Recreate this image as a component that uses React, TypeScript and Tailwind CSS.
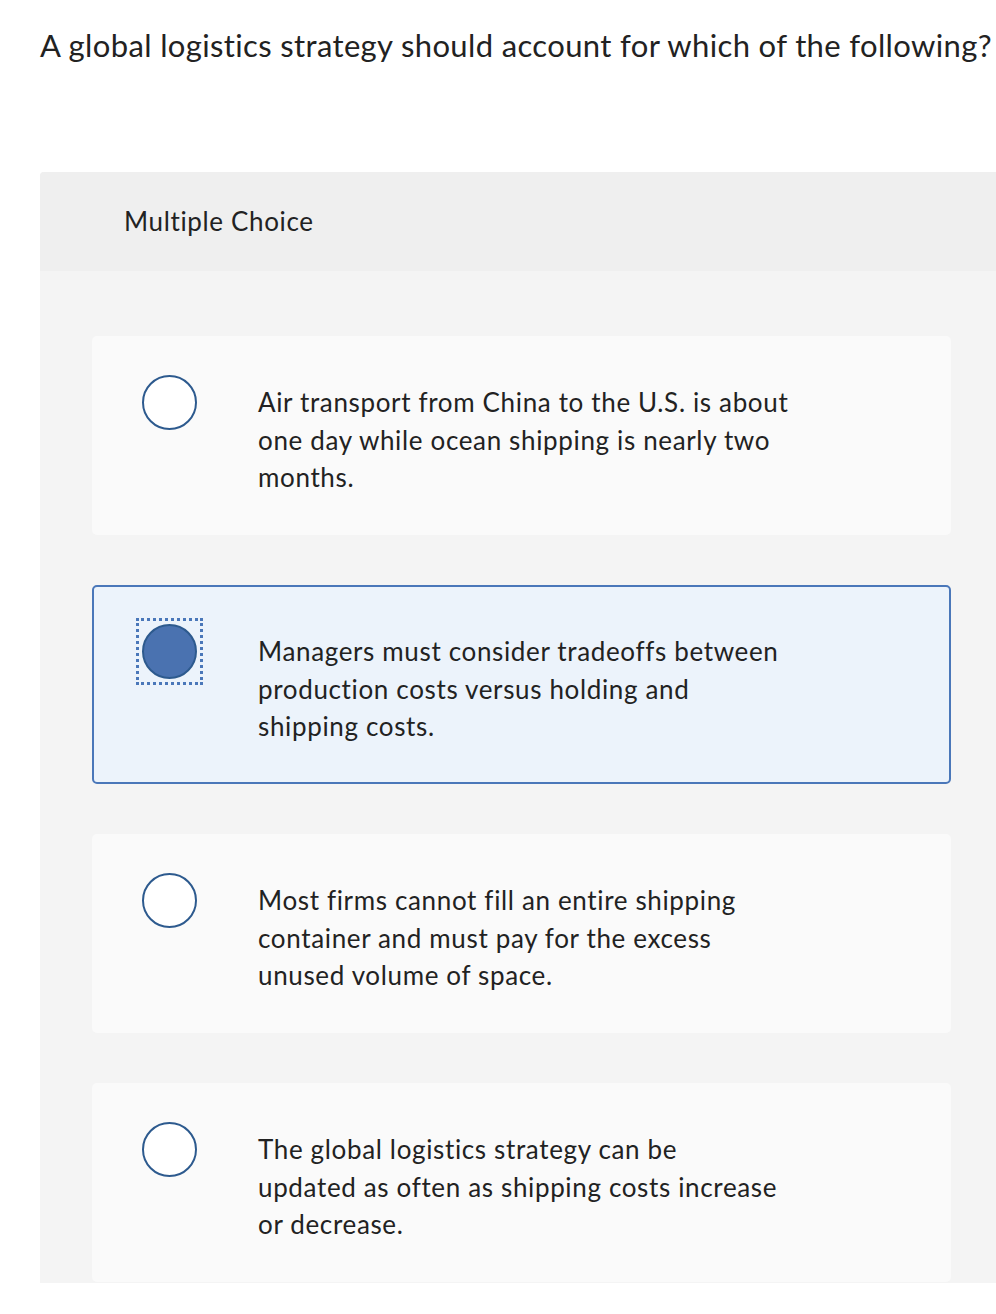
import { useState } from 'react'

const options = [
  ['Air transport from China to the U.S. is about', 'one day while ocean shipping is nearly two', 'months.'],
  ['Managers must consider tradeoffs between', 'production costs versus holding and', 'shipping costs.'],
  ['Most firms cannot fill an entire shipping', 'container and must pay for the excess', 'unused volume of space.'],
  ['The global logistics strategy can be', 'updated as often as shipping costs increase', 'or decrease.'],
]

export default function App() {
  const [selected, setSelected] = useState(1)

  return (
    <div className="w-[996px] h-[1314px] overflow-hidden bg-white text-[#222] font-['Lato',sans-serif] [font-variant-ligatures:none]">
      <h1 className="pl-10 pt-[27px] text-[31px] leading-[37px] tracking-[0.36px] font-normal whitespace-nowrap">
        A global logistics strategy should account for which of the following?
      </h1>

      <div className="ml-10 mt-[108px] h-[1111px] overflow-hidden rounded-tl bg-[#f4f4f4]">
        <div className="flex h-[99px] items-center bg-[#efefef] pl-[84px] text-[26px] tracking-[0.65px]">
          Multiple Choice
        </div>

        <div className="flex flex-col gap-[50px] pt-[65px] pl-[52px] pr-[45px]">
          {options.map((lines, i) => {
            const active = i === selected
            return (
              <div
                key={i}
                onClick={() => setSelected(i)}
                className={
                  'flex h-[199px] cursor-pointer rounded-[5px] border-2 pl-[48px] pt-[37px] ' +
                  (active ? 'border-[#4a77b9] bg-[#ecf3fb]' : 'border-transparent bg-[#fafafa]')
                }
              >
                <div className="w-[116px] shrink-0">
                  <div className={active ? 'w-fit outline-[3px] outline-dotted outline-offset-[3px] outline-[#4a77b9]' : 'w-fit'}>
                    <div
                      className={
                        'h-[55px] w-[55px] rounded-full border-2 border-[#2d5a8e] ' +
                        (active ? 'bg-[#4a72b0]' : 'bg-white')
                      }
                    />
                  </div>
                </div>
                <div className="pt-[9px] text-[26px] leading-[37.5px] tracking-[0.65px] whitespace-nowrap">
                  {lines.map((l, j) => (
                    <div key={j}>{l}</div>
                  ))}
                </div>
              </div>
            )
          })}
        </div>
      </div>
    </div>
  )
}
